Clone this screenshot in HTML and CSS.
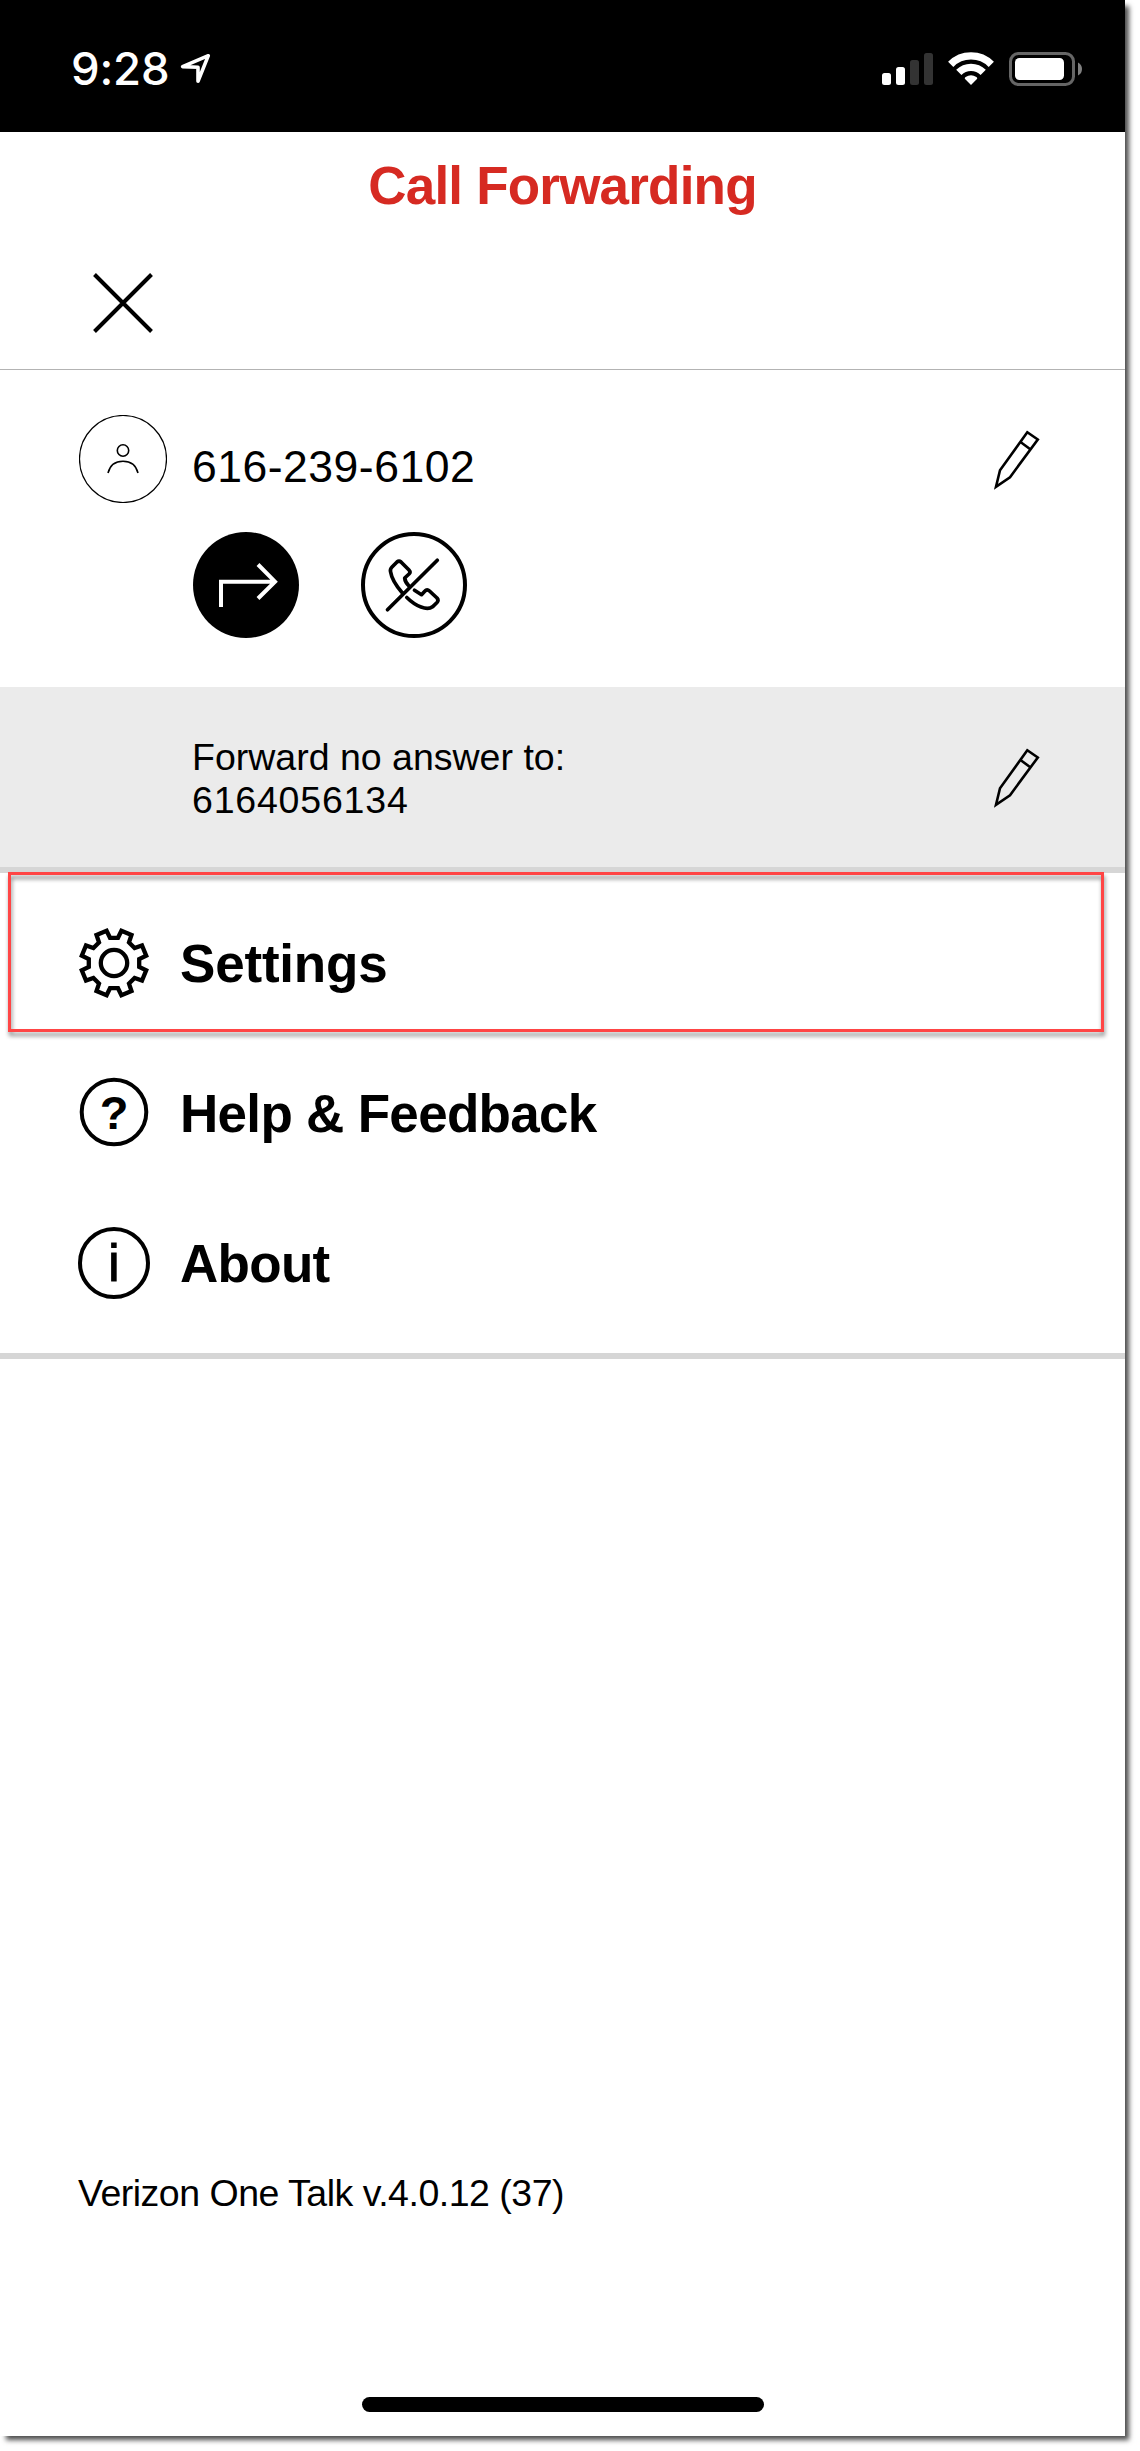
FILE: index.html
```html
<!DOCTYPE html>
<html lang="en">
<head>
<meta charset="utf-8">
<title>Call Forwarding</title>
<link rel="stylesheet" href="styles.css">
</head>
<body>
<main class="screen">
  <header class="status">
    <span class="time">9:28</span>
    <svg class="location" viewBox="180 53 32 32" width="32" height="32"><path d="M208.3 55.7 182.6 66.6 198 67.2V81.3Z" fill="none" stroke="#fff" stroke-width="3.6" stroke-linejoin="round"/></svg>
    <svg class="indicators" viewBox="882 50 202 38" width="202" height="38">
      <g fill="#fff"><rect x="882" y="73" width="9" height="12" rx="2.5"/><rect x="896" y="67" width="9" height="18" rx="2.5"/></g>
      <g fill="#333"><rect x="910" y="60" width="9" height="25" rx="2.5"/><rect x="924" y="53" width="9" height="32" rx="2.5"/></g>
      <g fill="none" stroke="#fff" stroke-width="7.4"><path d="M950.7 64.3A28.7 28.7 0 0 1 991.3 64.3"/><path d="M958.8 72.4A17.3 17.3 0 0 1 983.2 72.4"/></g>
      <path d="M971 85 964.8 78.8Q964.6 77.6 965.6 77Q971 73.5 976.4 77Q977.4 77.6 977.2 78.8Z" fill="#fff"/>
      <rect x="1010.5" y="53.5" width="63" height="31" rx="8" fill="none" stroke="#666" stroke-width="3"/>
      <rect x="1015" y="58" width="49" height="22" rx="4.5" fill="#fff"/>
      <path d="M1078 62.5Q1082 64.5 1082 69Q1082 73.5 1078 75.5Z" fill="#808080"/>
    </svg>
  </header>
  <div class="titlebar">
    <h1>Call Forwarding</h1>
    <svg class="close" viewBox="0 0 60 60" width="60" height="60"><path d="M1.5 1.5 58.5 58.5M58.5 1.5 1.5 58.5" stroke="#000" stroke-width="4"/></svg>
  </div>
  <section class="line">
    <svg class="avatar" viewBox="79 415 88 88" width="88" height="88" fill="none" stroke="#000"><circle cx="123" cy="459" r="43.5" stroke-width="1.2"/><g stroke-width="1.6"><circle cx="123" cy="450.5" r="5.7"/><path d="M108 473C110 465 116 461.2 123 461.2S136 465 138 473"/></g></svg>
    <div class="details">
      <div class="number">616-239-6102</div>
      <div class="actions">
        <svg viewBox="193 532 106 106" width="106" height="106"><circle cx="246" cy="585" r="53"/><path d="M221 607V581.7H274M258 564.5 275 581.7 258 598.5" fill="none" stroke="#fff" stroke-width="4"/></svg>
        <svg viewBox="361 532 106 106" width="106" height="106" fill="none" stroke="#000" stroke-width="3.7" stroke-linecap="round" stroke-linejoin="round"><circle cx="414" cy="585" r="51" stroke-width="4"/><path d="M387.5 609.7 437.3 560.3M402 592.5C395.5 585 391.5 578 390.5 571.5Q390 569 392 567L397 562Q399 560.2 401 562L409 570Q411 572 409 574L404.7 578Q405 582 409 586M414.5 590.3 421.5 594.7 425 591Q427 588.6 429.5 591L437 598Q439 600.5 437 602.5L432.5 606.8C427 611 416 606.5 406.8 597.5"/></svg>
      </div>
    </div>
    <svg class="edit" viewBox="994 430 46 60" width="46" height="60" fill="none" stroke="#000" stroke-width="2.6"><path d="M1027.3 432.3 1037.8 439.5 1010 477.2 996 486.8 1000 470.3ZM1020.5 442 1030.6 449.5"/></svg>
  </section>
  <section class="forward">
    <p>Forward no answer to:<br><span>6164056134</span></p>
    <svg class="edit" viewBox="994 430 46 60" width="46" height="60" fill="none" stroke="#000" stroke-width="2.6"><path d="M1027.3 432.3 1037.8 439.5 1010 477.2 996 486.8 1000 470.3ZM1020.5 442 1030.6 449.5"/></svg>
  </section>
  <nav class="menu">
    <div class="highlight"></div>
    <a class="item">
      <svg viewBox="-36 -36 72 72" width="72" height="72" fill="none" stroke="#000" stroke-width="4.3"><circle r="13.2"/><path d="M-4-25.2H4L7.4-32.2 17.5-28 15-20.6 20.6-15 28-17.5 32.2-7.4 25.2-4V4L32.2 7.4 28 17.5 20.6 15 15 20.6 17.5 28 7.4 32.2 4 25.2H-4L-7.4 32.2-17.5 28-15 20.6-20.6 15-28 17.5-32.2 7.4-25.2 4V-4L-32.2-7.4-28-17.5-20.6-15-15-20.6-17.5-28-7.4-32.2Z"/></svg>
      <span class="settings">Settings</span>
    </a>
    <a class="item">
      <svg viewBox="-36 -35 72 72" width="72" height="72"><circle r="32.3" fill="none" stroke="#000" stroke-width="4"/><text class="question" y="17" text-anchor="middle">?</text></svg>
      <span class="help">Help &amp; Feedback</span>
    </a>
    <a class="item">
      <svg viewBox="-36 -36 72 72" width="72" height="72"><circle r="34" fill="none" stroke="#000" stroke-width="4"/><text class="info" y="18" text-anchor="middle">i</text></svg>
      <span class="about">About</span>
    </a>
  </nav>
  <footer>
    <p class="version">Verizon One Talk v.4.0.12 (37)</p>
    <div class="home"></div>
  </footer>
</main>
</body>
</html>
```
FILE: styles.css
```css
* { box-sizing: border-box; }
body { margin: 0; background: #fff; color: #000; font-family: "Liberation Sans", Arial, sans-serif; overflow: hidden; height: 2451px; }
h1, p { margin: 0; }
svg { display: block; flex: none; }
.screen { position: relative; width: 1125px; height: 2436px; background: #fff; display: flex; flex-direction: column; box-shadow: 5px 5px 5px -1px rgba(0, 0, 0, .7); }
.status { height: 132px; background: #000; color: #fff; display: flex; align-items: flex-start; padding: 0 41px 0 71px; flex: none; }
.time { font: 500 45.5px/54px Inter, sans-serif; width: 109px; margin-top: 42px; letter-spacing: -.2px; white-space: nowrap; }
.location { margin-top: 53px; }
.indicators { margin: 50px 0 0 auto; }
.titlebar { height: 238px; border-bottom: 1px solid #b3b3b3; flex: none; }
h1 { font-size: 53px; line-height: 60px; margin-top: 24px; text-align: center; color: #d62a22; letter-spacing: -.8px; }
.close { margin: 57px 0 0 93px; }
.line { height: 317px; display: flex; align-items: flex-start; padding: 45px 85px 0 79px; flex: none; }
.details { margin-left: 26px; }
.number { font-size: 44.5px; line-height: 50px; margin: 27px 0 40px -1px; letter-spacing: .5px; white-space: nowrap; }
.actions { display: flex; gap: 62px; }
.line .edit { margin: 15px 0 0 auto; }
.forward { height: 186px; background: #ebebeb; border-bottom: 6px solid #d6d6d6; display: flex; align-items: flex-start; justify-content: space-between; padding: 0 85px 0 192px; flex: none; }
.forward p { font-size: 37.5px; line-height: 43px; margin-top: 49px; letter-spacing: 0; }
.forward span { letter-spacing: .8px; }
.forward .edit { margin-top: 61px; }
.menu { position: relative; height: 486px; border-bottom: 6px solid #d6d6d6; padding-top: 15px; flex: none; }
.item { height: 150px; padding-left: 78px; display: flex; align-items: center; gap: 30px; font-size: 53px; line-height: 60px; font-weight: 700; white-space: nowrap; }
.item span { padding-top: 2px; }
.settings { letter-spacing: -.2px; }
.help { letter-spacing: -.7px; }
.about { letter-spacing: -.7px; }
.highlight { position: absolute; left: 8px; top: -1px; width: 1096px; height: 160px; border: 3px solid #ff4545; filter: drop-shadow(1px 4px 2px rgba(0, 0, 0, .45)); }
.question { font-size: 47px; font-weight: 700; }
.info { font-size: 51px; font-weight: 400; stroke: #000; stroke-width: 1px; }
footer { flex: 1; display: flex; flex-direction: column; justify-content: space-between; padding: 812px 0 24px 78px; }
.version { font-size: 37.5px; line-height: 44px; letter-spacing: -.5px; }
.home { width: 402px; height: 15px; border-radius: 8px; background: #000; margin-left: 284px; }
```
